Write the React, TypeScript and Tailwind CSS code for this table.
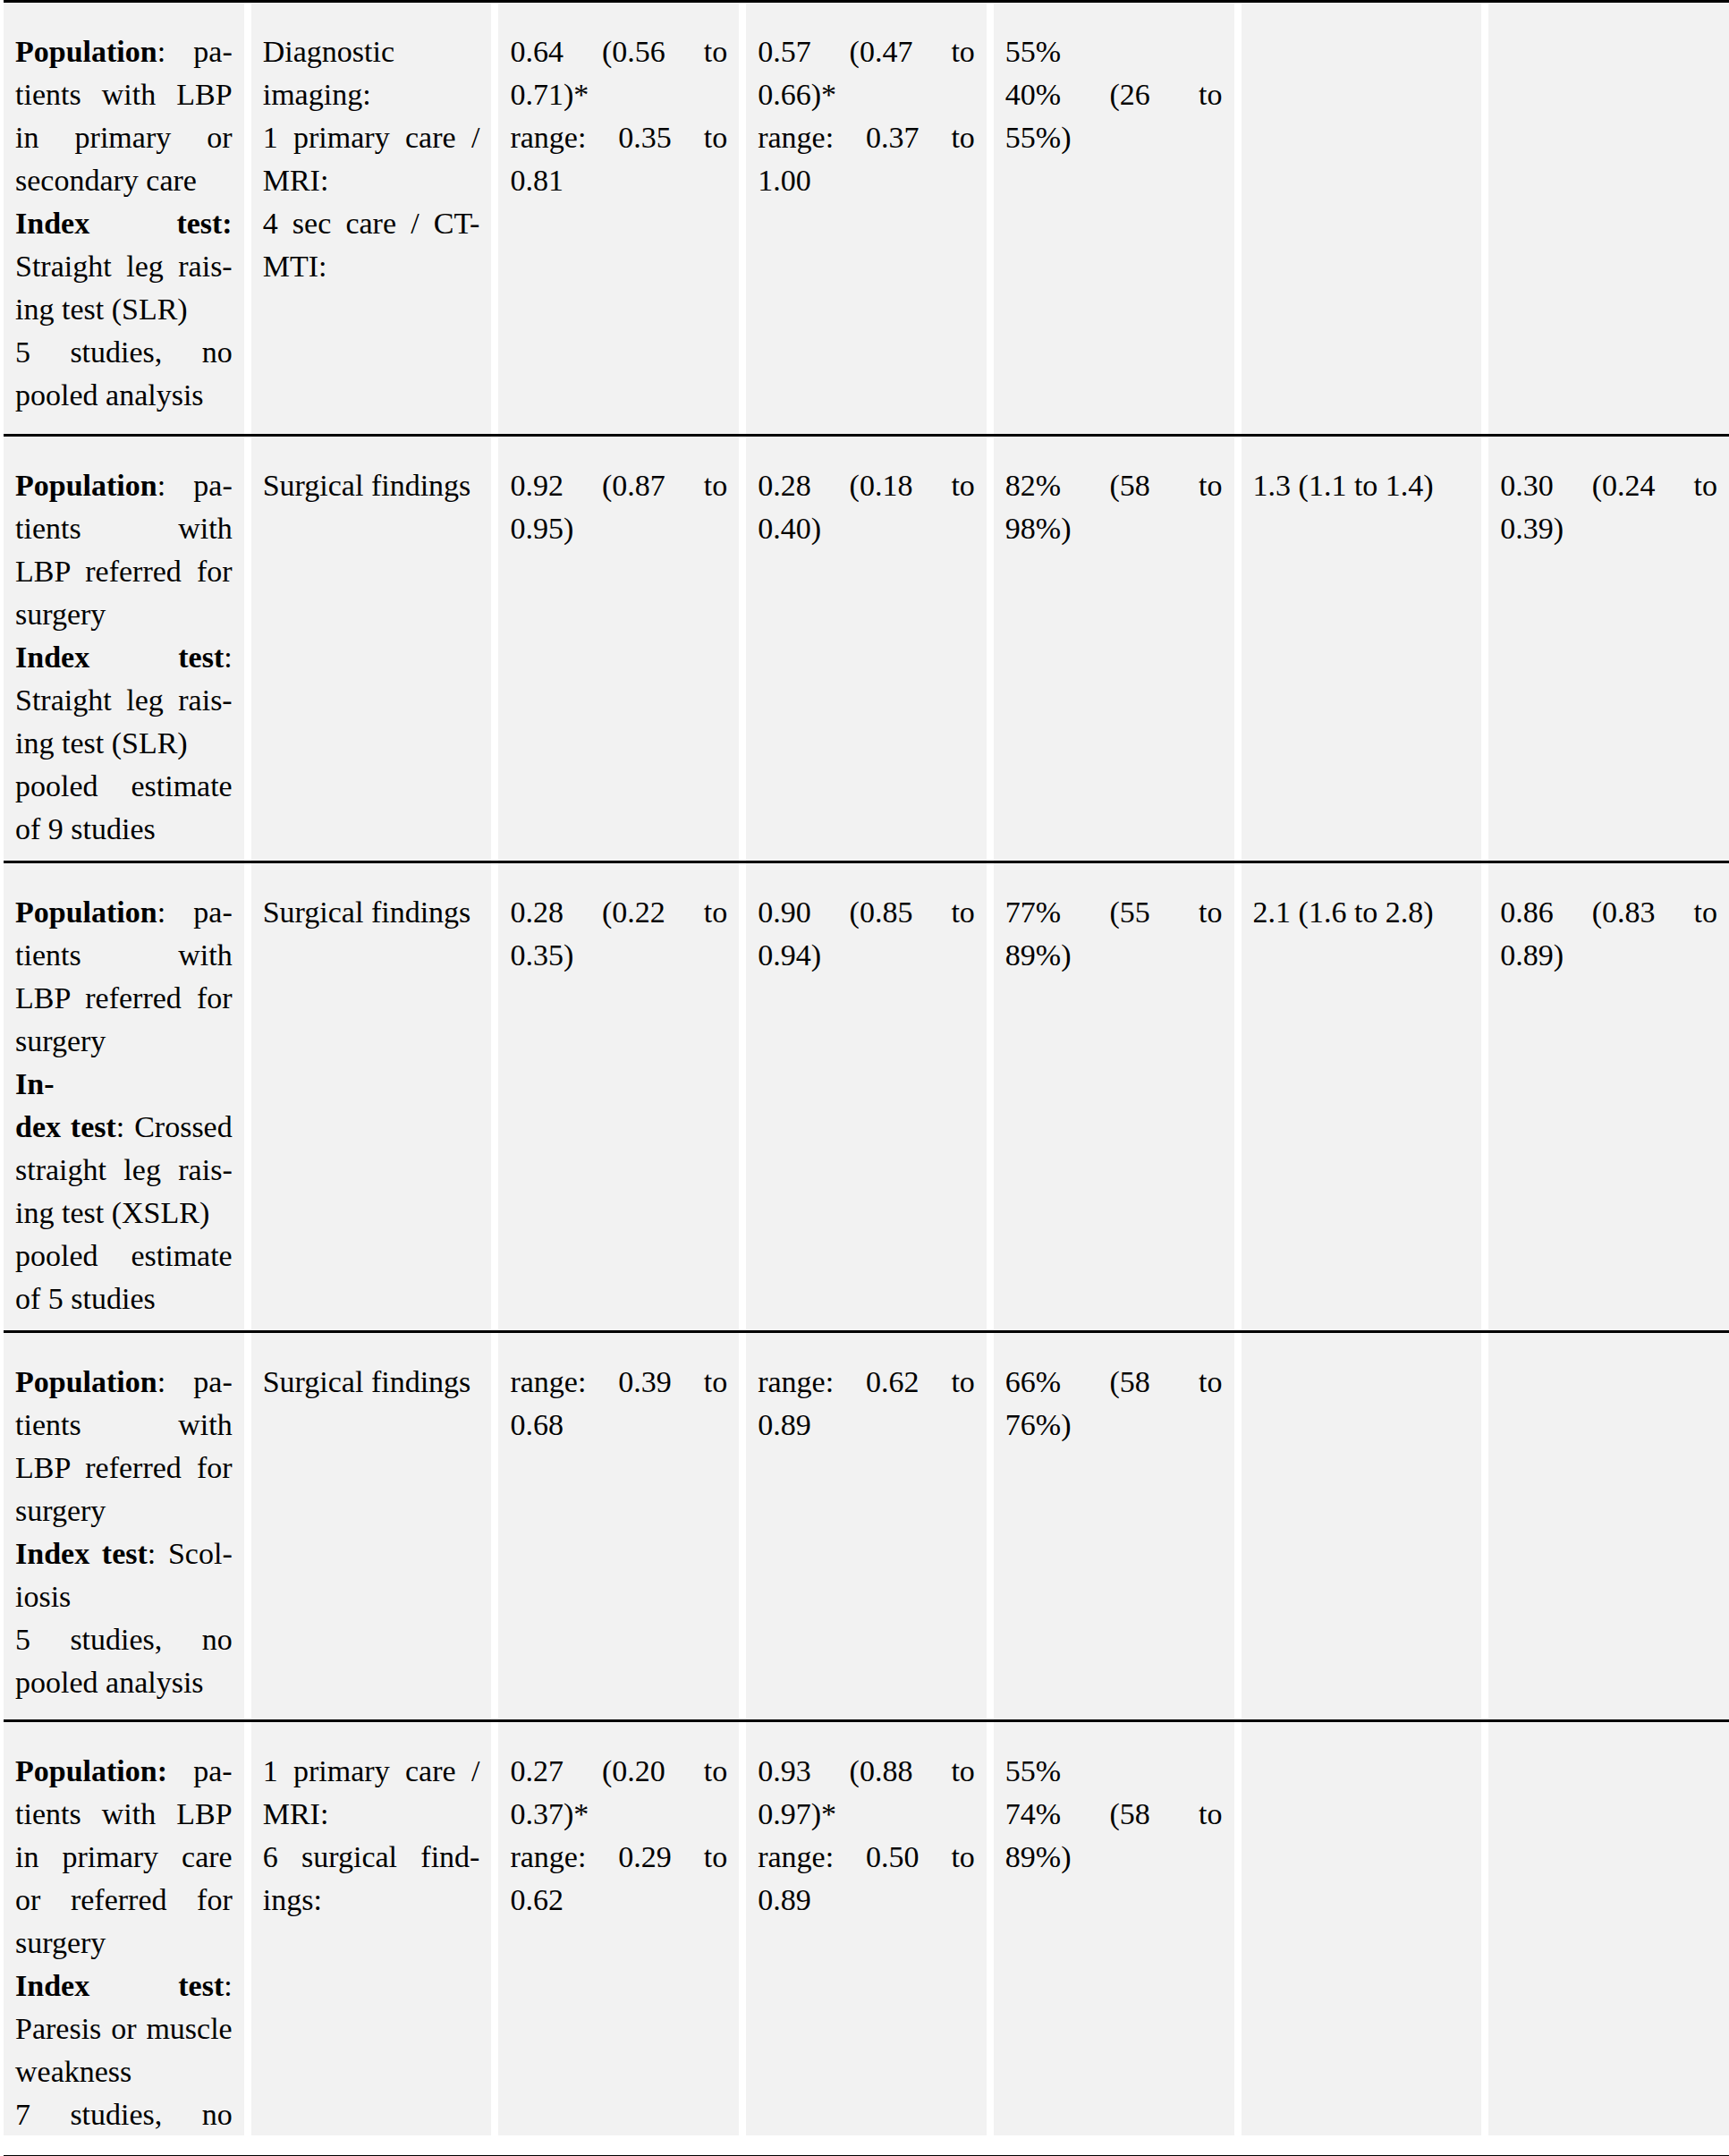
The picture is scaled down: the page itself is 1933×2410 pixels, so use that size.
import React from 'react';

type Line = { text: string; justify: boolean };

// J = justified line, L = left (paragraph end) line; **x** marks bold
const J = (text: string): Line => ({ text, justify: true });
const L = (text: string): Line => ({ text, justify: false });

type Row = { cells: Line[][]; pad: string; clipped?: boolean };

const rows: Row[] = [
  {
    pad: 'pb-[19px]',
    cells: [
      [
        J('**Population**: pa-'),
        J('tients with LBP'),
        J('in primary or'),
        L('secondary care'),
        J('**Index test:**'),
        J('Straight leg rais-'),
        L('ing test (SLR)'),
        J('5 studies, no'),
        L('pooled analysis'),
      ],
      [L('Diagnostic'), L('imaging:'), J('1 primary care /'), L('MRI:'), J('4 sec care / CT-'), L('MTI:')],
      [J('0.64 (0.56 to'), L('0.71)*'), J('range: 0.35 to'), L('0.81')],
      [J('0.57 (0.47 to'), L('0.66)*'), J('range: 0.37 to'), L('1.00')],
      [L('55%'), J('40% (26 to'), L('55%)')],
      [],
      [],
    ],
  },
  {
    pad: 'pb-[11px]',
    cells: [
      [
        J('**Population**: pa-'),
        J('tients with'),
        J('LBP referred for'),
        L('surgery'),
        J('**Index test**:'),
        J('Straight leg rais-'),
        L('ing test (SLR)'),
        J('pooled estimate'),
        L('of 9 studies'),
      ],
      [L('Surgical findings')],
      [J('0.92 (0.87 to'), L('0.95)')],
      [J('0.28 (0.18 to'), L('0.40)')],
      [J('82% (58 to'), L('98%)')],
      [L('1.3 (1.1 to 1.4)')],
      [J('0.30 (0.24 to'), L('0.39)')],
    ],
  },
  {
    pad: 'pb-[11px]',
    cells: [
      [
        J('**Population**: pa-'),
        J('tients with'),
        J('LBP referred for'),
        L('surgery'),
        L('**In-**'),
        J('**dex test**: Crossed'),
        J('straight leg rais-'),
        L('ing test (XSLR)'),
        J('pooled estimate'),
        L('of 5 studies'),
      ],
      [L('Surgical findings')],
      [J('0.28 (0.22 to'), L('0.35)')],
      [J('0.90 (0.85 to'), L('0.94)')],
      [J('77% (55 to'), L('89%)')],
      [L('2.1 (1.6 to 2.8)')],
      [J('0.86 (0.83 to'), L('0.89)')],
    ],
  },
  {
    pad: 'pb-[17px]',
    cells: [
      [
        J('**Population**: pa-'),
        J('tients with'),
        J('LBP referred for'),
        L('surgery'),
        J('**Index test**: Scol-'),
        L('iosis'),
        J('5 studies, no'),
        L('pooled analysis'),
      ],
      [L('Surgical findings')],
      [J('range: 0.39 to'), L('0.68')],
      [J('range: 0.62 to'), L('0.89')],
      [J('66% (58 to'), L('76%)')],
      [],
      [],
    ],
  },
  {
    pad: '',
    clipped: true,
    cells: [
      [
        J('**Population:** pa-'),
        J('tients with LBP'),
        J('in primary care'),
        J('or referred for'),
        L('surgery'),
        J('**Index test**:'),
        J('Paresis or muscle'),
        L('weakness'),
        J('7 studies, no'),
      ],
      [J('1 primary care /'), L('MRI:'), J('6 surgical find-'), L('ings:')],
      [J('0.27 (0.20 to'), L('0.37)*'), J('range: 0.29 to'), L('0.62')],
      [J('0.93 (0.88 to'), L('0.97)*'), J('range: 0.50 to'), L('0.89')],
      [L('55%'), J('74% (58 to'), L('89%)')],
      [],
      [],
    ],
  },
];

function renderText(text: string) {
  return text.split('**').map((part, i) =>
    i % 2 === 1 ? (
      <b key={i} className="font-bold">
        {part}
      </b>
    ) : (
      <span key={i}>{part}</span>
    )
  );
}

function Cell({ lines, pad, clipped }: { lines: Line[]; pad: string; clipped?: boolean }) {
  return (
    <div
      className={
        clipped
          ? 'bg-[#f2f2f2] px-[13px] pt-[31px] h-[462px] overflow-hidden'
          : `bg-[#f2f2f2] px-[13px] pt-[31px] ${pad}`
      }
    >
      {lines.map((line, i) => (
        <div key={i} className={line.justify ? 'text-justify [text-align-last:justify]' : 'text-left'}>
          {renderText(line.text)}
        </div>
      ))}
    </div>
  );
}

export default function App() {
  return (
    <div className="w-[1933px] pl-[4px] bg-white text-black font-['Liberation_Serif',serif] text-[34px] leading-[48px]">
      {rows.map((row, r) => (
        <div key={r} className="border-t-[3px] border-black">
          <div className="grid grid-cols-7 gap-x-[8px]">
            {row.cells.map((lines, c) => (
              <Cell key={c} lines={lines} pad={row.pad} clipped={row.clipped} />
            ))}
          </div>
        </div>
      ))}
      <div className="mt-[22px] border-t-[3px] border-black" />
    </div>
  );
}
